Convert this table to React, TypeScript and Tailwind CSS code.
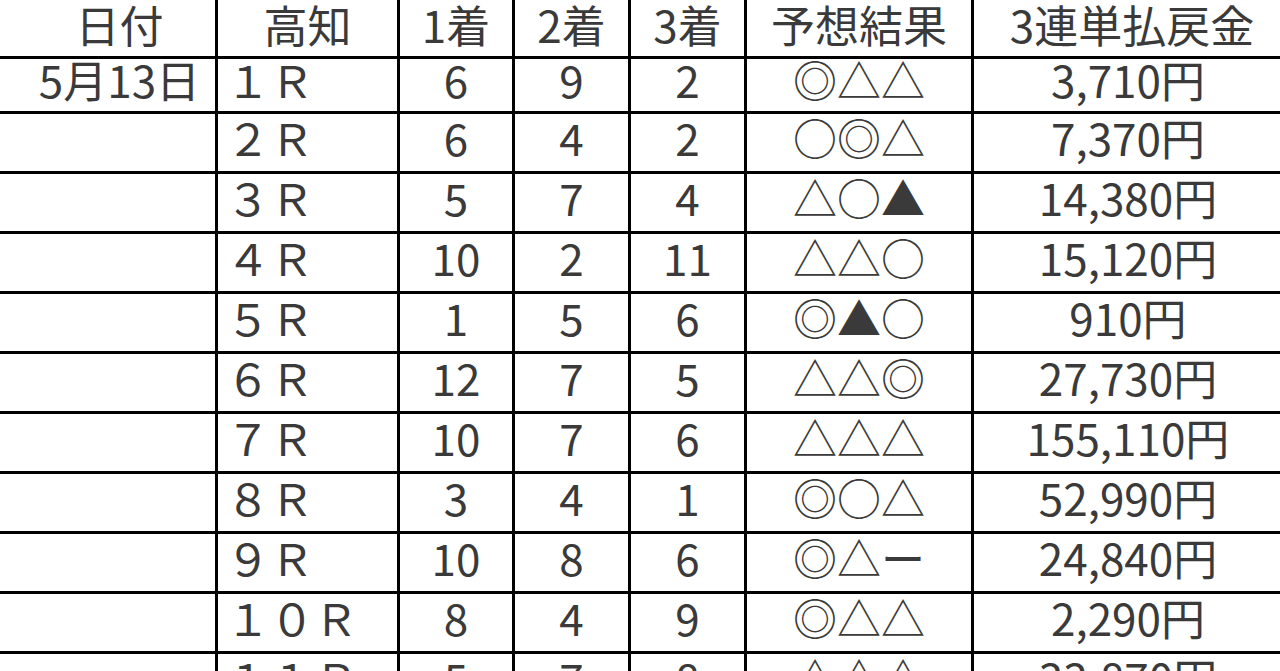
const rows = [
  { date: '5月13日', race: '１Ｒ', a: '6', b: '9', c: '2', mark: '◎△△', pay: '3,710円' },
  { date: '', race: '２Ｒ', a: '6', b: '4', c: '2', mark: '○◎△', pay: '7,370円' },
  { date: '', race: '３Ｒ', a: '5', b: '7', c: '4', mark: '△○▲', pay: '14,380円' },
  { date: '', race: '４Ｒ', a: '10', b: '2', c: '11', mark: '△△○', pay: '15,120円' },
  { date: '', race: '５Ｒ', a: '1', b: '5', c: '6', mark: '◎▲○', pay: '910円' },
  { date: '', race: '６Ｒ', a: '12', b: '7', c: '5', mark: '△△◎', pay: '27,730円' },
  { date: '', race: '７Ｒ', a: '10', b: '7', c: '6', mark: '△△△', pay: '155,110円' },
  { date: '', race: '８Ｒ', a: '3', b: '4', c: '1', mark: '◎○△', pay: '52,990円' },
  { date: '', race: '９Ｒ', a: '10', b: '8', c: '6', mark: '◎△ー', pay: '24,840円' },
  { date: '', race: '１０Ｒ', a: '8', b: '4', c: '9', mark: '◎△△', pay: '2,290円' },
  { date: '', race: '１１Ｒ', a: '5', b: '7', c: '8', mark: '△△△', pay: '33,870円' },
]

const cols = 'grid grid-cols-[218px_182px_115px_116px_116px_227px_1fr]'
const cell = 'flex items-center justify-center border-b-[3px] border-r-[3px] border-black'
const last = 'flex items-center justify-center border-b-[3px] border-black'

export default function App() {
  return (
    <div
      className="w-[1280px] h-[671px] overflow-hidden bg-white text-[44px] leading-[40px] text-[#3a3a3a]"
      style={{ fontFamily: '"Noto Sans CJK JP", "Noto Sans", sans-serif' }}
    >
      {/* header */}
      <div className={`${cols} h-[59px] [&>div]:pb-[8px]`}>
        <div className={`${cell} pl-[24px]`}>日付</div>
        <div className={cell}>高知</div>
        <div className={cell}>1着</div>
        <div className={cell}>2着</div>
        <div className={cell}>3着</div>
        <div className={cell}>予想結果</div>
        <div className={`${last} pl-[10px]`}>3連単払戻金</div>
      </div>

      {rows.map((r, i) => (
        <div key={i} className={`${cols} ${i === 0 ? 'h-[55px]' : 'h-[60px]'} [&>div]:pb-[12px]`}>
          <div className={`${cell} pl-[24px]`}>{r.date}</div>
          <div className={`${cell} !justify-start pl-[8px]`}>{r.race}</div>
          <div className={cell}>{r.a}</div>
          <div className={cell}>{r.b}</div>
          <div className={cell}>{r.c}</div>
          <div className={cell}>{r.mark}</div>
          <div className={`${last} pl-[2px]`}>{r.pay}</div>
        </div>
      ))}
    </div>
  )
}
